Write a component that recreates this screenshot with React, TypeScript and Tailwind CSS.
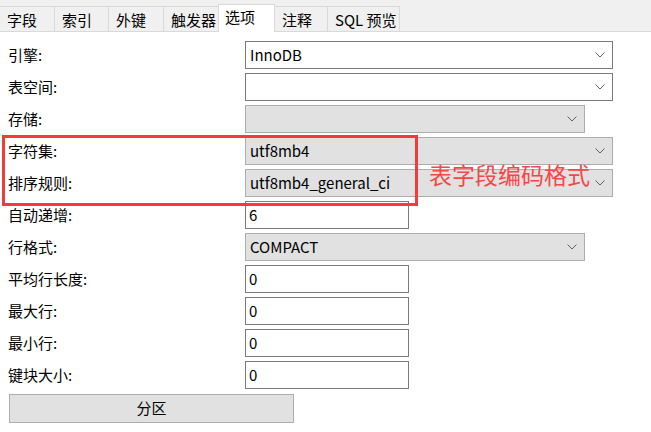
import { ReactNode } from "react";

const tabs = [
  { label: "字段", w: "w-[54px]" },
  { label: "索引", w: "w-[54px]" },
  { label: "外键", w: "w-[55px]" },
  { label: "触发器", w: "w-[55px]" },
  { label: "选项", w: "w-[57px]", active: true },
  { label: "注释", w: "w-[52px]" },
  { label: "SQL 预览", w: "w-[73px]" },
];

const Chevron = () => (
  <svg width="10" height="6" viewBox="0 0 10 6" className="shrink-0">
    <path d="M0.5 0.5 L5 5 L9.5 0.5" fill="none" stroke="#5f5f5f" strokeWidth="1" />
  </svg>
);

const Select = ({ value, wide = true, disabled = false }: { value?: string; wide?: boolean; disabled?: boolean }) => (
  <div
    className={`h-[28px] flex items-center justify-between pl-[4px] pr-[7px] border ${
      wide ? "w-[368px]" : "w-[340px]"
    } ${disabled ? "bg-[#e1e1e1] border-[#adadad]" : "bg-white border-[#7a7a7a]"}`}
  >
    <span>{value}</span>
    <Chevron />
  </div>
);

const Input = ({ value }: { value: string }) => (
  <div className="h-[28px] w-[164px] flex items-center pl-[3px] border border-[#7a7a7a] bg-white">
    {value}
  </div>
);

const Row = ({ label, children }: { label: string; children: ReactNode }) => (
  <div className="flex items-center h-[28px]">
    <div className="w-[237px] shrink-0">{label}</div>
    {children}
  </div>
);

export default function App() {
  return (
    <div
      className="relative w-[651px] h-[432px] bg-white text-[15px] text-black overflow-hidden"
      style={{ fontFamily: '"Noto Sans CJK SC", "Noto Sans", sans-serif' }}
    >
      {/* tab strip */}
      <div className="h-[32px] bg-[#f0f0f0] border-b border-[#d9d9d9] flex items-end">
        {tabs.map((t, i) =>
          t.active ? (
            <div
              key={t.label}
              className={`${t.w} h-[28px] -mb-px bg-white border border-b-0 border-[#d9d9d9] pl-[6px] pt-[1px] leading-[22px] z-10`}
            >
              {t.label}
            </div>
          ) : (
            <div
              key={t.label}
              className={`${t.w} h-[25px] border-t border-[#d9d9d9] ${
                i === 0 || tabs[i - 1].active ? "" : "border-l"
              } ${i === tabs.length - 1 ? "border-r" : ""} pl-[7px] pt-[1px] leading-[24px]`}
            >
              {t.label}
            </div>
          )
        )}
      </div>

      {/* options form */}
      <div className="pl-[8px] pt-[9px] flex flex-col gap-[4px]">
        <Row label="引擎:">
          <Select value="InnoDB" />
        </Row>
        <Row label="表空间:">
          <Select />
        </Row>
        <Row label="存储:">
          <Select wide={false} disabled />
        </Row>
        <Row label="字符集:">
          <Select value="utf8mb4" disabled />
        </Row>
        <Row label="排序规则:">
          <Select value="utf8mb4_general_ci" disabled />
        </Row>
        <Row label="自动递增:">
          <Input value="6" />
        </Row>
        <Row label="行格式:">
          <Select value="COMPACT" wide={false} disabled />
        </Row>
        <Row label="平均行长度:">
          <Input value="0" />
        </Row>
        <Row label="最大行:">
          <Input value="0" />
        </Row>
        <Row label="最小行:">
          <Input value="0" />
        </Row>
        <Row label="键块大小:">
          <Input value="0" />
        </Row>
        <button className="mt-[1px] ml-px w-[285px] h-[29px] bg-[#e1e1e1] border border-[#adadad] flex items-center justify-center">
          分区
        </button>
      </div>

      {/* annotation */}
      <div className="absolute left-[2px] top-[135px] w-[416px] h-[71px] border-[3px] border-[#f23c3c] pointer-events-none" />
      <div className="absolute left-[429px] top-[159px] text-[23px] leading-[30px] text-[#f44848]">
        表字段编码格式
      </div>
    </div>
  );
}
